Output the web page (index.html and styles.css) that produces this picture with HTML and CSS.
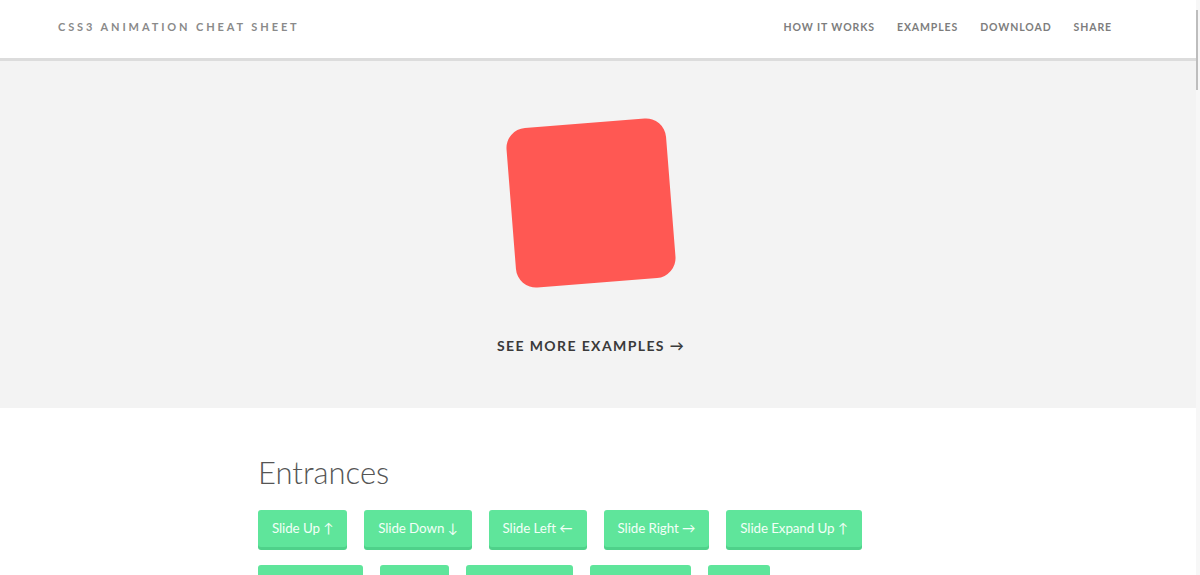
FILE: index.html
```html
<!DOCTYPE html>
<html>
<head>
<meta charset="utf-8">
<link rel="stylesheet" href="styles.css">
</head>
<body>
<div class="page">
  <header class="header">
    <div class="logo">CSS3 ANIMATION CHEAT SHEET</div>
    <nav class="nav">
      <a>HOW IT WORKS</a>
      <a>EXAMPLES</a>
      <a>DOWNLOAD</a>
      <a>SHARE</a>
    </nav>
  </header>
  <section class="hero">
    <div class="stage"><div class="box"></div></div>
    <a class="more">SEE MORE EXAMPLES &#8594;</a>
  </section>
  <section class="content">
    <h2 class="title">Entrances</h2>
    <div class="buttons">
      <span class="btn">Slide Up &#8593;</span>
      <span class="btn">Slide Down &#8595;</span>
      <span class="btn">Slide Left &#8592;</span>
      <span class="btn">Slide Right &#8594;</span>
      <span class="btn">Slide Expand Up &#8593;</span>
    </div>
    <div class="buttons">
      <span class="btn">Expand Up &#8593;</span>
      <span class="btn">Fade In</span>
      <span class="btn">Expand Open</span>
      <span class="btn">Big Entrance</span>
      <span class="btn">Hatch</span>
    </div>
  </section>
</div>
<div class="scrollbar"><div class="thumb"></div></div>
</body>
</html>
```
FILE: styles.css
```css
html, body {
  margin: 0;
  padding: 0;
  overflow: hidden;
  background: #fff;
}
.page {
  width: 1196px;
  font-family: Lato, "Liberation Sans", sans-serif;
}
.header {
  height: 58px;
  border-bottom: 3px solid #dcdcdc;
  display: flex;
  align-items: center;
  justify-content: space-between;
  padding: 0 83px 0 58px;
  background: #fff;
  box-sizing: content-box;
}
.logo {
  font-size: 11px;
  font-weight: 700;
  letter-spacing: 2.9px;
  color: #8a8a8a;
  margin-bottom: 5px;
}
.nav {
  display: flex;
  gap: 22px;
  margin-bottom: 5px;
  margin-right: 1px;
}
.nav a {
  font-size: 10.5px;
  font-weight: 700;
  letter-spacing: 0.9px;
  color: #7d7d7d;
}
.hero {
  background: #f3f3f3;
  height: 347px;
  display: flex;
  flex-direction: column;
  align-items: center;
}
.stage {
  height: 200px;
  width: 200px;
  margin-top: 42px;
  margin-left: -14px;
  display: flex;
  align-items: center;
  justify-content: center;
}
.box {
  width: 160px;
  height: 160px;
  background: #ff5853;
  border-radius: 20px;
  transform: rotate(-4.5deg);
}
.more {
  margin-top: 34px;
  margin-left: -14px;
  font-size: 14px;
  font-weight: 700;
  letter-spacing: 1.4px;
  color: #3a3a3a;
}
.content {
  padding: 44px 0 0 258px;
}
.title {
  margin: 0 0 18px 0;
  font-size: 31px;
  font-weight: 300;
  color: #555;
  line-height: 40px;
}
.buttons {
  display: flex;
  gap: 17px;
  margin-bottom: 18px;
}
.btn {
  height: 37px;
  line-height: 37px;
  padding: 0 14px;
  background: #5fe59b;
  color: #f2fff7;
  font-size: 13.4px;
  letter-spacing: -0.1px;
  border-radius: 3px;
  box-shadow: 0 3px 0 #4fd18a;
}
.scrollbar {
  position: fixed;
  top: 0;
  right: 0;
  width: 4px;
  height: 575px;
  background: #f7f7f7;
}
.thumb {
  margin-top: 10px;
  height: 80px;
  width: 2px;
  background: #bdbdbd;
}
```
